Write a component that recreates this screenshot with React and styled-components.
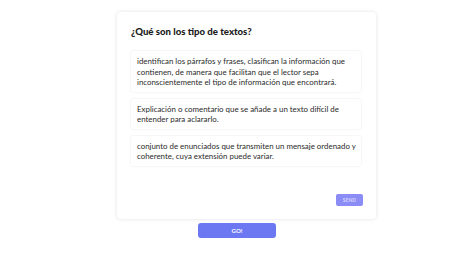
import React from "react";
import styled, { createGlobalStyle } from "styled-components";

const GlobalStyle = createGlobalStyle`
  body {
    margin: 0;
    background: #ffffff;
    font-family: "Lato", "Noto Sans", sans-serif;
    color: #222;
  }
`;

const Page = styled.div`
  width: 474px;
  height: 267px;
  display: flex;
  flex-direction: column;
  align-items: center;
  padding-top: 12px;
  box-sizing: border-box;
`;

const Card = styled.div`
  width: 259px;
  height: 207px;
  margin-left: 19px;
  box-sizing: border-box;
  padding: 14px 15px 13px 14px;
  background: #fff;
  border-radius: 4px;
  box-shadow: 0 0 4px rgba(0, 0, 0, 0.12);
  display: flex;
  flex-direction: column;
`;

const Title = styled.h1`
  margin: 0 0 14px 0;
  font-size: 9.6px;
  font-weight: 900;
  color: #1a1a1a;
`;

const Options = styled.div`
  display: flex;
  flex-direction: column;
  gap: 7px;
`;

const Option = styled.div`
  padding: 5px 4px 4px 6px;
  font-size: 7.9px;
  line-height: 10.5px;
  color: #2a2a2a;
  border-radius: 2px;
  box-shadow: 0 0 2px rgba(0, 0, 0, 0.12);
`;

const Footer = styled.div`
  margin-top: auto;
  display: flex;
  justify-content: flex-end;
  margin-right: -2px;
`;

const SendButton = styled.button`
  width: 27px;
  height: 12px;
  border: none;
  border-radius: 2px;
  background: #8c8cf7;
  color: #d4d6ff;
  font-family: inherit;
  font-size: 5px;
  font-weight: 700;
  padding: 0;
`;

const GoButton = styled.button`
  margin-top: 4px;
  width: 78px;
  height: 15px;
  border: none;
  border-radius: 3px;
  background: #6b78f2;
  color: #fff;
  font-family: inherit;
  font-size: 6px;
  font-weight: 700;
  padding: 0;
`;

const options = [
  "identifican los párrafos y frases, clasifican la información que contienen, de manera que facilitan que el lector sepa inconscientemente el tipo de información que encontrará.",
  "Explicación o comentario que se añade a un texto difícil de entender para aclararlo.",
  "conjunto de enunciados que transmiten un mensaje ordenado y coherente, cuya extensión puede variar.",
];

export default function App() {
  return (
    <>
      <GlobalStyle />
      <Page>
        <Card>
          <Title>¿Qué son los tipo de textos?</Title>
          <Options>
            {options.map((o) => (
              <Option key={o}>{o}</Option>
            ))}
          </Options>
          <Footer>
            <SendButton>SEND</SendButton>
          </Footer>
        </Card>
        <GoButton>GO!</GoButton>
      </Page>
    </>
  );
}
